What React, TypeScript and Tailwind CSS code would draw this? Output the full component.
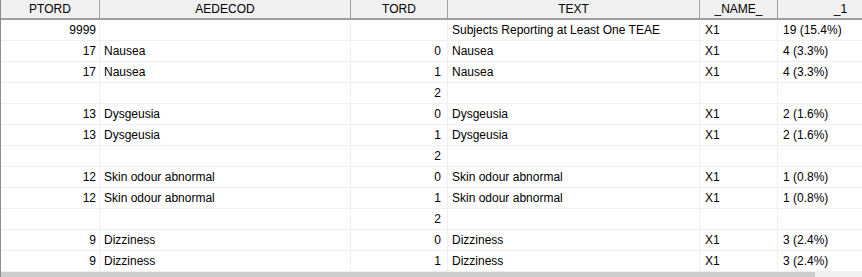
const cols = "grid grid-cols-[99px_251px_97px_252px_78px_126px]";

const headers = ["PTORD", "AEDECOD", "TORD", "TEXT", "_NAME_", "_1"];

const rows: string[][] = [
  ["9999", "", "", "Subjects Reporting at Least One TEAE", "X1", "19 (15.4%)"],
  ["17", "Nausea", "0", "Nausea", "X1", "4 (3.3%)"],
  ["17", "Nausea", "1", "Nausea", "X1", "4 (3.3%)"],
  ["", "", "2", "", "", ""],
  ["13", "Dysgeusia", "0", "Dysgeusia", "X1", "2 (1.6%)"],
  ["13", "Dysgeusia", "1", "Dysgeusia", "X1", "2 (1.6%)"],
  ["", "", "2", "", "", ""],
  ["12", "Skin odour abnormal", "0", "Skin odour abnormal", "X1", "1 (0.8%)"],
  ["12", "Skin odour abnormal", "1", "Skin odour abnormal", "X1", "1 (0.8%)"],
  ["", "", "2", "", "", ""],
  ["9", "Dizziness", "0", "Dizziness", "X1", "3 (2.4%)"],
  ["9", "Dizziness", "1", "Dizziness", "X1", "3 (2.4%)"],
];

// numeric columns sit on the right
const align = ["text-right pr-[3px]", "pl-[4px]", "text-right pr-[6px]", "pl-[4px]", "pl-[5px]", "pl-[5px]"];

export default function App() {
  return (
    <div
      className="w-[862px] h-[277px] overflow-hidden bg-white border-l border-[#8c8c8c] flex flex-col text-[12px] text-black leading-none"
      style={{ fontFamily: '"Liberation Sans", Arial, sans-serif' }}
    >
      <div className={`${cols} h-[20px] shrink-0 bg-[#f0f0f0] border-b-2 border-[#a0a0a0]`}>
        {headers.map((h) => (
          <div key={h} className="flex items-center justify-center border-r border-[#a0a0a0] whitespace-nowrap">
            {h}
          </div>
        ))}
      </div>
      {rows.map((r, i) => (
        <div key={i} className={`${cols} h-[21px] shrink-0 border-b border-[#f0f0f0]`}>
          {r.map((c, j) => (
            <div
              key={j}
              className={`flex items-center whitespace-nowrap border-r border-[#f0f0f0] ${align[j]} ${
                j === 0 || j === 2 ? "justify-end" : ""
              }`}
            >
              {c}
            </div>
          ))}
        </div>
      ))}
      <div className="flex h-[6px] shrink-0 bg-[#f0f0f0]">
        <div className="w-[814px] bg-[#cdcdcd]" />
      </div>
    </div>
  );
}
